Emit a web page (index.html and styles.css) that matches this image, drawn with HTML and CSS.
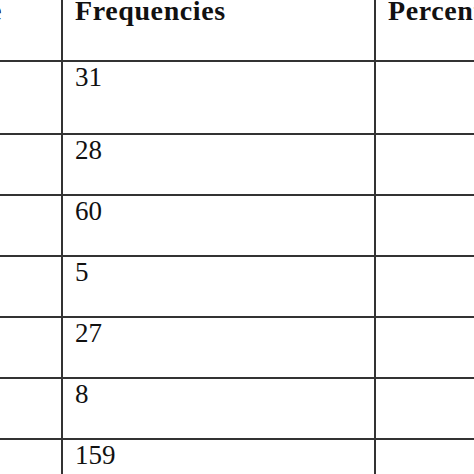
FILE: index.html
```html
<!DOCTYPE html>
<html lang="en">
<head>
<meta charset="utf-8">
<title>Frequencies table</title>
<link rel="stylesheet" href="styles.css">
</head>
<body>
<table class="freq">
  <colgroup>
    <col class="c1">
    <col class="c2">
    <col class="c3">
  </colgroup>
  <thead>
    <tr class="head-row">
      <th>Type</th>
      <th>Frequencies</th>
      <th>Percentage</th>
    </tr>
  </thead>
  <tbody>
    <tr class="row tall"><td></td><td>31</td><td></td></tr>
    <tr class="row"><td></td><td>28</td><td></td></tr>
    <tr class="row"><td></td><td>60</td><td></td></tr>
    <tr class="row"><td></td><td>5</td><td></td></tr>
    <tr class="row"><td></td><td>27</td><td></td></tr>
    <tr class="row"><td></td><td>8</td><td></td></tr>
    <tr class="row"><td></td><td>159</td><td></td></tr>
  </tbody>
</table>
</body>
</html>
```
FILE: styles.css
```css
html, body {
  margin: 0;
  padding: 0;
  background: #ffffff;
  overflow: hidden;
  width: 474px;
  height: 474px;
}

.freq {
  border-collapse: collapse;
  table-layout: fixed;
  margin-left: -73px;
  margin-top: -20px;
  width: 800px;
  font-family: "Liberation Serif", "Times New Roman", serif;
  font-size: 27px;
  line-height: 30px;
  color: #111111;
}

.freq th,
.freq td {
  border: 2px solid #333333;
  padding: 0 13px 0 12px;
  vertical-align: top;
  text-align: left;
  white-space: nowrap;
  overflow: hidden;
}

.freq th {
  font-weight: bold;
  font-size: 28px;
  letter-spacing: 0.6px;
  padding-top: 14px;
}

.c1 { width: 134px; }
.c2 { width: 313px; }
.c3 { width: 353px; }

.head-row { height: 80px; }
.row { height: 61px; }
.row.tall { height: 73px; }
```
